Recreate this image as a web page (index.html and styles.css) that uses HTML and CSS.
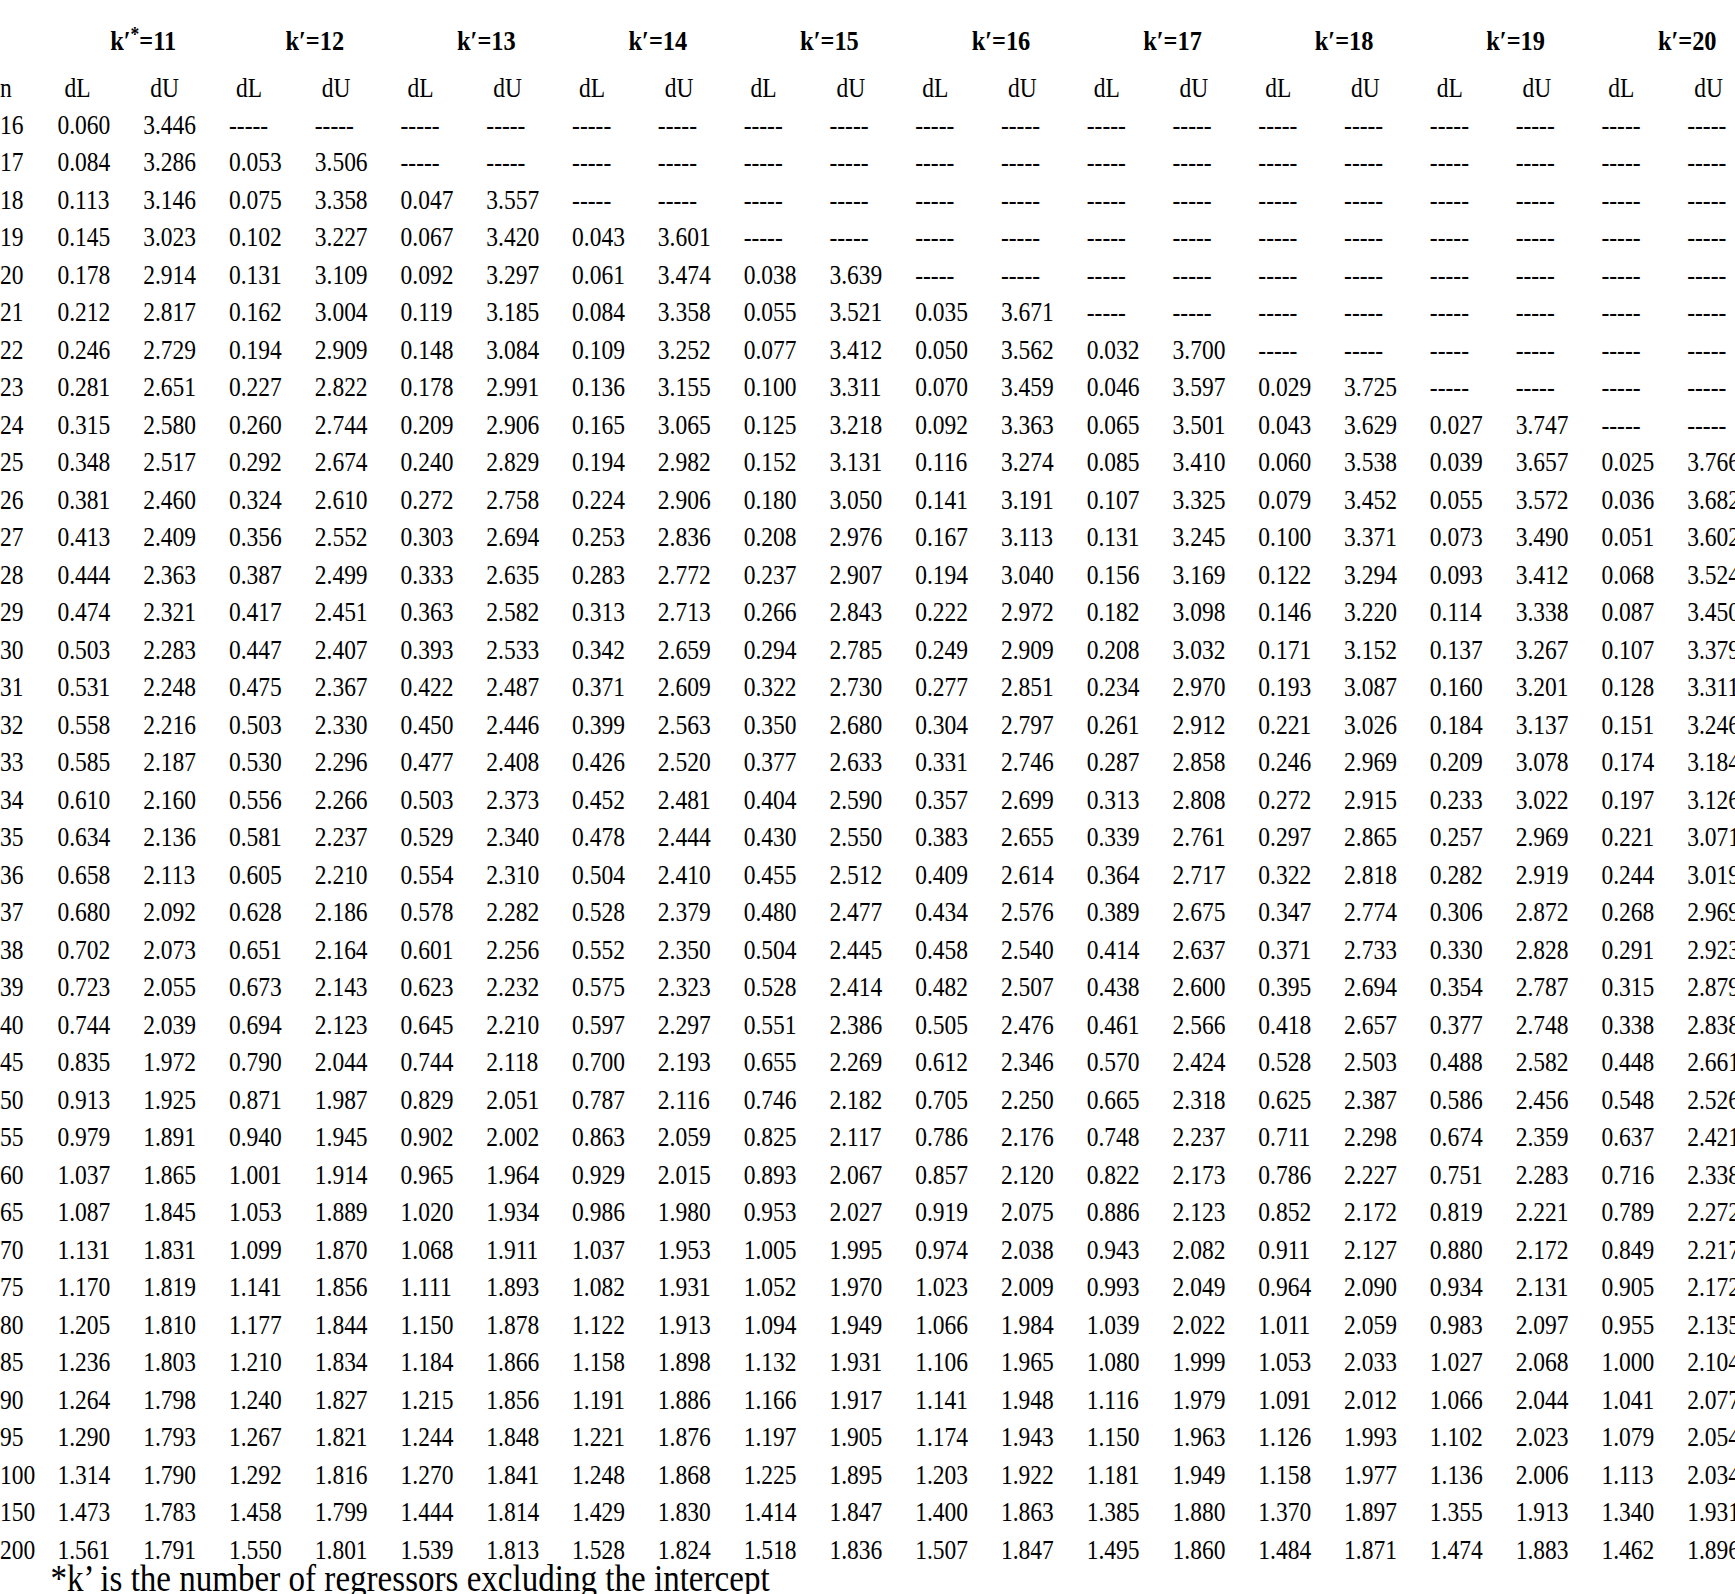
FILE: index.html
```html
<!DOCTYPE html>
<html lang="en">
<head>
<meta charset="utf-8">
<title>Durbin-Watson critical values, k′ = 11 to 20</title>
<link rel="stylesheet" href="styles.css">
</head>
<body>
<div class="sheet">
<table class="dw">
<colgroup>
<col class="c-n"><col class="c-v"><col class="c-v"><col class="c-v"><col class="c-v"><col class="c-v"><col class="c-v"><col class="c-v"><col class="c-v"><col class="c-v"><col class="c-v"><col class="c-v"><col class="c-v"><col class="c-v"><col class="c-v"><col class="c-v"><col class="c-v"><col class="c-v"><col class="c-v"><col class="c-v"><col class="c-v">
</colgroup>
<thead>
<tr class="kh"><th></th><th colspan="2">k′<sup class="ast">*</sup>=11</th><th colspan="2">k′=12</th><th colspan="2">k′=13</th><th colspan="2">k′=14</th><th colspan="2">k′=15</th><th colspan="2">k′=16</th><th colspan="2">k′=17</th><th colspan="2">k′=18</th><th colspan="2">k′=19</th><th colspan="2">k′=20</th></tr>
<tr class="sh"><th>n</th><th class="lab">dL</th><th class="lab">dU</th><th class="lab">dL</th><th class="lab">dU</th><th class="lab">dL</th><th class="lab">dU</th><th class="lab">dL</th><th class="lab">dU</th><th class="lab">dL</th><th class="lab">dU</th><th class="lab">dL</th><th class="lab">dU</th><th class="lab">dL</th><th class="lab">dU</th><th class="lab">dL</th><th class="lab">dU</th><th class="lab">dL</th><th class="lab">dU</th><th class="lab">dL</th><th class="lab">dU</th></tr>
</thead>
<tbody>
<tr><td>16</td><td>0.060</td><td>3.446</td><td>-----</td><td>-----</td><td>-----</td><td>-----</td><td>-----</td><td>-----</td><td>-----</td><td>-----</td><td>-----</td><td>-----</td><td>-----</td><td>-----</td><td>-----</td><td>-----</td><td>-----</td><td>-----</td><td>-----</td><td>-----</td></tr>
<tr><td>17</td><td>0.084</td><td>3.286</td><td>0.053</td><td>3.506</td><td>-----</td><td>-----</td><td>-----</td><td>-----</td><td>-----</td><td>-----</td><td>-----</td><td>-----</td><td>-----</td><td>-----</td><td>-----</td><td>-----</td><td>-----</td><td>-----</td><td>-----</td><td>-----</td></tr>
<tr><td>18</td><td>0.113</td><td>3.146</td><td>0.075</td><td>3.358</td><td>0.047</td><td>3.557</td><td>-----</td><td>-----</td><td>-----</td><td>-----</td><td>-----</td><td>-----</td><td>-----</td><td>-----</td><td>-----</td><td>-----</td><td>-----</td><td>-----</td><td>-----</td><td>-----</td></tr>
<tr><td>19</td><td>0.145</td><td>3.023</td><td>0.102</td><td>3.227</td><td>0.067</td><td>3.420</td><td>0.043</td><td>3.601</td><td>-----</td><td>-----</td><td>-----</td><td>-----</td><td>-----</td><td>-----</td><td>-----</td><td>-----</td><td>-----</td><td>-----</td><td>-----</td><td>-----</td></tr>
<tr><td>20</td><td>0.178</td><td>2.914</td><td>0.131</td><td>3.109</td><td>0.092</td><td>3.297</td><td>0.061</td><td>3.474</td><td>0.038</td><td>3.639</td><td>-----</td><td>-----</td><td>-----</td><td>-----</td><td>-----</td><td>-----</td><td>-----</td><td>-----</td><td>-----</td><td>-----</td></tr>
<tr><td>21</td><td>0.212</td><td>2.817</td><td>0.162</td><td>3.004</td><td>0.119</td><td>3.185</td><td>0.084</td><td>3.358</td><td>0.055</td><td>3.521</td><td>0.035</td><td>3.671</td><td>-----</td><td>-----</td><td>-----</td><td>-----</td><td>-----</td><td>-----</td><td>-----</td><td>-----</td></tr>
<tr><td>22</td><td>0.246</td><td>2.729</td><td>0.194</td><td>2.909</td><td>0.148</td><td>3.084</td><td>0.109</td><td>3.252</td><td>0.077</td><td>3.412</td><td>0.050</td><td>3.562</td><td>0.032</td><td>3.700</td><td>-----</td><td>-----</td><td>-----</td><td>-----</td><td>-----</td><td>-----</td></tr>
<tr><td>23</td><td>0.281</td><td>2.651</td><td>0.227</td><td>2.822</td><td>0.178</td><td>2.991</td><td>0.136</td><td>3.155</td><td>0.100</td><td>3.311</td><td>0.070</td><td>3.459</td><td>0.046</td><td>3.597</td><td>0.029</td><td>3.725</td><td>-----</td><td>-----</td><td>-----</td><td>-----</td></tr>
<tr><td>24</td><td>0.315</td><td>2.580</td><td>0.260</td><td>2.744</td><td>0.209</td><td>2.906</td><td>0.165</td><td>3.065</td><td>0.125</td><td>3.218</td><td>0.092</td><td>3.363</td><td>0.065</td><td>3.501</td><td>0.043</td><td>3.629</td><td>0.027</td><td>3.747</td><td>-----</td><td>-----</td></tr>
<tr><td>25</td><td>0.348</td><td>2.517</td><td>0.292</td><td>2.674</td><td>0.240</td><td>2.829</td><td>0.194</td><td>2.982</td><td>0.152</td><td>3.131</td><td>0.116</td><td>3.274</td><td>0.085</td><td>3.410</td><td>0.060</td><td>3.538</td><td>0.039</td><td>3.657</td><td>0.025</td><td>3.766</td></tr>
<tr><td>26</td><td>0.381</td><td>2.460</td><td>0.324</td><td>2.610</td><td>0.272</td><td>2.758</td><td>0.224</td><td>2.906</td><td>0.180</td><td>3.050</td><td>0.141</td><td>3.191</td><td>0.107</td><td>3.325</td><td>0.079</td><td>3.452</td><td>0.055</td><td>3.572</td><td>0.036</td><td>3.682</td></tr>
<tr><td>27</td><td>0.413</td><td>2.409</td><td>0.356</td><td>2.552</td><td>0.303</td><td>2.694</td><td>0.253</td><td>2.836</td><td>0.208</td><td>2.976</td><td>0.167</td><td>3.113</td><td>0.131</td><td>3.245</td><td>0.100</td><td>3.371</td><td>0.073</td><td>3.490</td><td>0.051</td><td>3.602</td></tr>
<tr><td>28</td><td>0.444</td><td>2.363</td><td>0.387</td><td>2.499</td><td>0.333</td><td>2.635</td><td>0.283</td><td>2.772</td><td>0.237</td><td>2.907</td><td>0.194</td><td>3.040</td><td>0.156</td><td>3.169</td><td>0.122</td><td>3.294</td><td>0.093</td><td>3.412</td><td>0.068</td><td>3.524</td></tr>
<tr><td>29</td><td>0.474</td><td>2.321</td><td>0.417</td><td>2.451</td><td>0.363</td><td>2.582</td><td>0.313</td><td>2.713</td><td>0.266</td><td>2.843</td><td>0.222</td><td>2.972</td><td>0.182</td><td>3.098</td><td>0.146</td><td>3.220</td><td>0.114</td><td>3.338</td><td>0.087</td><td>3.450</td></tr>
<tr><td>30</td><td>0.503</td><td>2.283</td><td>0.447</td><td>2.407</td><td>0.393</td><td>2.533</td><td>0.342</td><td>2.659</td><td>0.294</td><td>2.785</td><td>0.249</td><td>2.909</td><td>0.208</td><td>3.032</td><td>0.171</td><td>3.152</td><td>0.137</td><td>3.267</td><td>0.107</td><td>3.379</td></tr>
<tr><td>31</td><td>0.531</td><td>2.248</td><td>0.475</td><td>2.367</td><td>0.422</td><td>2.487</td><td>0.371</td><td>2.609</td><td>0.322</td><td>2.730</td><td>0.277</td><td>2.851</td><td>0.234</td><td>2.970</td><td>0.193</td><td>3.087</td><td>0.160</td><td>3.201</td><td>0.128</td><td>3.311</td></tr>
<tr><td>32</td><td>0.558</td><td>2.216</td><td>0.503</td><td>2.330</td><td>0.450</td><td>2.446</td><td>0.399</td><td>2.563</td><td>0.350</td><td>2.680</td><td>0.304</td><td>2.797</td><td>0.261</td><td>2.912</td><td>0.221</td><td>3.026</td><td>0.184</td><td>3.137</td><td>0.151</td><td>3.246</td></tr>
<tr><td>33</td><td>0.585</td><td>2.187</td><td>0.530</td><td>2.296</td><td>0.477</td><td>2.408</td><td>0.426</td><td>2.520</td><td>0.377</td><td>2.633</td><td>0.331</td><td>2.746</td><td>0.287</td><td>2.858</td><td>0.246</td><td>2.969</td><td>0.209</td><td>3.078</td><td>0.174</td><td>3.184</td></tr>
<tr><td>34</td><td>0.610</td><td>2.160</td><td>0.556</td><td>2.266</td><td>0.503</td><td>2.373</td><td>0.452</td><td>2.481</td><td>0.404</td><td>2.590</td><td>0.357</td><td>2.699</td><td>0.313</td><td>2.808</td><td>0.272</td><td>2.915</td><td>0.233</td><td>3.022</td><td>0.197</td><td>3.126</td></tr>
<tr><td>35</td><td>0.634</td><td>2.136</td><td>0.581</td><td>2.237</td><td>0.529</td><td>2.340</td><td>0.478</td><td>2.444</td><td>0.430</td><td>2.550</td><td>0.383</td><td>2.655</td><td>0.339</td><td>2.761</td><td>0.297</td><td>2.865</td><td>0.257</td><td>2.969</td><td>0.221</td><td>3.071</td></tr>
<tr><td>36</td><td>0.658</td><td>2.113</td><td>0.605</td><td>2.210</td><td>0.554</td><td>2.310</td><td>0.504</td><td>2.410</td><td>0.455</td><td>2.512</td><td>0.409</td><td>2.614</td><td>0.364</td><td>2.717</td><td>0.322</td><td>2.818</td><td>0.282</td><td>2.919</td><td>0.244</td><td>3.019</td></tr>
<tr><td>37</td><td>0.680</td><td>2.092</td><td>0.628</td><td>2.186</td><td>0.578</td><td>2.282</td><td>0.528</td><td>2.379</td><td>0.480</td><td>2.477</td><td>0.434</td><td>2.576</td><td>0.389</td><td>2.675</td><td>0.347</td><td>2.774</td><td>0.306</td><td>2.872</td><td>0.268</td><td>2.969</td></tr>
<tr><td>38</td><td>0.702</td><td>2.073</td><td>0.651</td><td>2.164</td><td>0.601</td><td>2.256</td><td>0.552</td><td>2.350</td><td>0.504</td><td>2.445</td><td>0.458</td><td>2.540</td><td>0.414</td><td>2.637</td><td>0.371</td><td>2.733</td><td>0.330</td><td>2.828</td><td>0.291</td><td>2.923</td></tr>
<tr><td>39</td><td>0.723</td><td>2.055</td><td>0.673</td><td>2.143</td><td>0.623</td><td>2.232</td><td>0.575</td><td>2.323</td><td>0.528</td><td>2.414</td><td>0.482</td><td>2.507</td><td>0.438</td><td>2.600</td><td>0.395</td><td>2.694</td><td>0.354</td><td>2.787</td><td>0.315</td><td>2.879</td></tr>
<tr><td>40</td><td>0.744</td><td>2.039</td><td>0.694</td><td>2.123</td><td>0.645</td><td>2.210</td><td>0.597</td><td>2.297</td><td>0.551</td><td>2.386</td><td>0.505</td><td>2.476</td><td>0.461</td><td>2.566</td><td>0.418</td><td>2.657</td><td>0.377</td><td>2.748</td><td>0.338</td><td>2.838</td></tr>
<tr><td>45</td><td>0.835</td><td>1.972</td><td>0.790</td><td>2.044</td><td>0.744</td><td>2.118</td><td>0.700</td><td>2.193</td><td>0.655</td><td>2.269</td><td>0.612</td><td>2.346</td><td>0.570</td><td>2.424</td><td>0.528</td><td>2.503</td><td>0.488</td><td>2.582</td><td>0.448</td><td>2.661</td></tr>
<tr><td>50</td><td>0.913</td><td>1.925</td><td>0.871</td><td>1.987</td><td>0.829</td><td>2.051</td><td>0.787</td><td>2.116</td><td>0.746</td><td>2.182</td><td>0.705</td><td>2.250</td><td>0.665</td><td>2.318</td><td>0.625</td><td>2.387</td><td>0.586</td><td>2.456</td><td>0.548</td><td>2.526</td></tr>
<tr><td>55</td><td>0.979</td><td>1.891</td><td>0.940</td><td>1.945</td><td>0.902</td><td>2.002</td><td>0.863</td><td>2.059</td><td>0.825</td><td>2.117</td><td>0.786</td><td>2.176</td><td>0.748</td><td>2.237</td><td>0.711</td><td>2.298</td><td>0.674</td><td>2.359</td><td>0.637</td><td>2.421</td></tr>
<tr><td>60</td><td>1.037</td><td>1.865</td><td>1.001</td><td>1.914</td><td>0.965</td><td>1.964</td><td>0.929</td><td>2.015</td><td>0.893</td><td>2.067</td><td>0.857</td><td>2.120</td><td>0.822</td><td>2.173</td><td>0.786</td><td>2.227</td><td>0.751</td><td>2.283</td><td>0.716</td><td>2.338</td></tr>
<tr><td>65</td><td>1.087</td><td>1.845</td><td>1.053</td><td>1.889</td><td>1.020</td><td>1.934</td><td>0.986</td><td>1.980</td><td>0.953</td><td>2.027</td><td>0.919</td><td>2.075</td><td>0.886</td><td>2.123</td><td>0.852</td><td>2.172</td><td>0.819</td><td>2.221</td><td>0.789</td><td>2.272</td></tr>
<tr><td>70</td><td>1.131</td><td>1.831</td><td>1.099</td><td>1.870</td><td>1.068</td><td>1.911</td><td>1.037</td><td>1.953</td><td>1.005</td><td>1.995</td><td>0.974</td><td>2.038</td><td>0.943</td><td>2.082</td><td>0.911</td><td>2.127</td><td>0.880</td><td>2.172</td><td>0.849</td><td>2.217</td></tr>
<tr><td>75</td><td>1.170</td><td>1.819</td><td>1.141</td><td>1.856</td><td>1.111</td><td>1.893</td><td>1.082</td><td>1.931</td><td>1.052</td><td>1.970</td><td>1.023</td><td>2.009</td><td>0.993</td><td>2.049</td><td>0.964</td><td>2.090</td><td>0.934</td><td>2.131</td><td>0.905</td><td>2.172</td></tr>
<tr><td>80</td><td>1.205</td><td>1.810</td><td>1.177</td><td>1.844</td><td>1.150</td><td>1.878</td><td>1.122</td><td>1.913</td><td>1.094</td><td>1.949</td><td>1.066</td><td>1.984</td><td>1.039</td><td>2.022</td><td>1.011</td><td>2.059</td><td>0.983</td><td>2.097</td><td>0.955</td><td>2.135</td></tr>
<tr><td>85</td><td>1.236</td><td>1.803</td><td>1.210</td><td>1.834</td><td>1.184</td><td>1.866</td><td>1.158</td><td>1.898</td><td>1.132</td><td>1.931</td><td>1.106</td><td>1.965</td><td>1.080</td><td>1.999</td><td>1.053</td><td>2.033</td><td>1.027</td><td>2.068</td><td>1.000</td><td>2.104</td></tr>
<tr><td>90</td><td>1.264</td><td>1.798</td><td>1.240</td><td>1.827</td><td>1.215</td><td>1.856</td><td>1.191</td><td>1.886</td><td>1.166</td><td>1.917</td><td>1.141</td><td>1.948</td><td>1.116</td><td>1.979</td><td>1.091</td><td>2.012</td><td>1.066</td><td>2.044</td><td>1.041</td><td>2.077</td></tr>
<tr><td>95</td><td>1.290</td><td>1.793</td><td>1.267</td><td>1.821</td><td>1.244</td><td>1.848</td><td>1.221</td><td>1.876</td><td>1.197</td><td>1.905</td><td>1.174</td><td>1.943</td><td>1.150</td><td>1.963</td><td>1.126</td><td>1.993</td><td>1.102</td><td>2.023</td><td>1.079</td><td>2.054</td></tr>
<tr><td>100</td><td>1.314</td><td>1.790</td><td>1.292</td><td>1.816</td><td>1.270</td><td>1.841</td><td>1.248</td><td>1.868</td><td>1.225</td><td>1.895</td><td>1.203</td><td>1.922</td><td>1.181</td><td>1.949</td><td>1.158</td><td>1.977</td><td>1.136</td><td>2.006</td><td>1.113</td><td>2.034</td></tr>
<tr><td>150</td><td>1.473</td><td>1.783</td><td>1.458</td><td>1.799</td><td>1.444</td><td>1.814</td><td>1.429</td><td>1.830</td><td>1.414</td><td>1.847</td><td>1.400</td><td>1.863</td><td>1.385</td><td>1.880</td><td>1.370</td><td>1.897</td><td>1.355</td><td>1.913</td><td>1.340</td><td>1.931</td></tr>
<tr><td>200</td><td>1.561</td><td>1.791</td><td>1.550</td><td>1.801</td><td>1.539</td><td>1.813</td><td>1.528</td><td>1.824</td><td>1.518</td><td>1.836</td><td>1.507</td><td>1.847</td><td>1.495</td><td>1.860</td><td>1.484</td><td>1.871</td><td>1.474</td><td>1.883</td><td>1.462</td><td>1.896</td></tr>
</tbody>
</table>
<p class="note">*k’ is the number of regressors excluding the intercept</p>
</div>
</body>
</html>
```

FILE: styles.css
```css
html, body {
  margin: 0;
  padding: 0;
  background: #ffffff;
}

body {
  font-family: "Liberation Serif", "Times New Roman", serif;
  color: #000000;
  overflow: hidden;
}

.sheet {
  width: 2040px;
  transform: scaleX(0.87);
  transform-origin: 0 0;
}

.dw {
  border-collapse: collapse;
  table-layout: fixed;
  width: 2038px;
  font-size: 27px;
}

.dw th,
.dw td {
  padding: 0;
  text-align: left;
  white-space: nowrap;
  font-weight: normal;
  vertical-align: top;
}

.c-n {
  width: 66px;
}

.c-v {
  width: 98.6px;
}

.kh th {
  font-size: 28px;
  font-weight: bold;
  text-align: center;
  line-height: 37.5px;
  padding-top: 22px;
  padding-bottom: 10px;
}

.ast {
  font-size: 0.72em;
  line-height: 0;
  vertical-align: 0.45em;
}

.sh th {
  line-height: 37px;
}

.sh th.lab {
  padding-left: 8px;
}

.dw tbody td {
  line-height: 37.5px;
  height: 37.5px;
}

.note {
  margin: -10px 0 0;
  padding-left: 58px;
  font-size: 38px;
  line-height: 38px;
}
```
